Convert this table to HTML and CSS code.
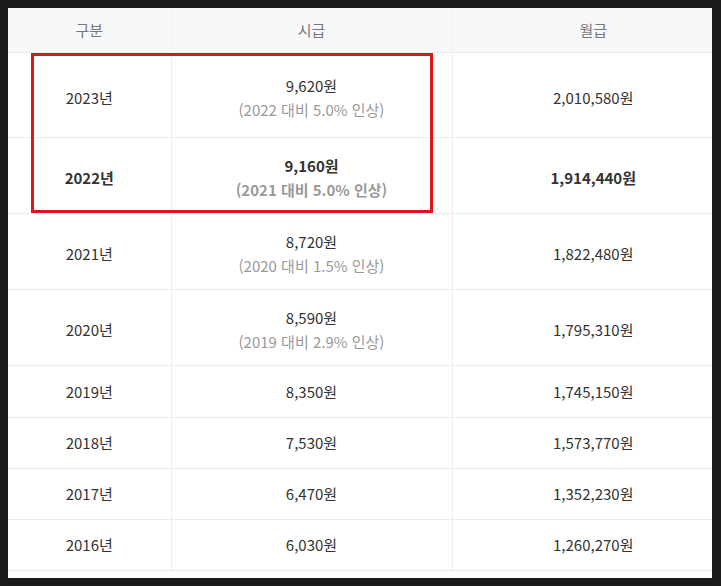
FILE: index.html
```html
<!DOCTYPE html>
<html lang="ko">
<head>
<meta charset="utf-8">
<link rel="stylesheet" href="styles.css">
</head>
<body>
<div class="frame">
  <table class="wage">
    <colgroup><col class="c1"><col class="c2"><col class="c3"></colgroup>
    <thead>
      <tr class="head"><th>구분</th><th>시급</th><th>월급</th></tr>
    </thead>
    <tbody>
      <tr class="r-first"><td>2023년</td><td>9,620원<span class="sub">(2022 대비 5.0% 인상)</span></td><td>2,010,580원</td></tr>
      <tr class="r-tall bold"><td>2022년</td><td>9,160원<span class="sub">(2021 대비 5.0% 인상)</span></td><td>1,914,440원</td></tr>
      <tr class="r-tall"><td>2021년</td><td>8,720원<span class="sub">(2020 대비 1.5% 인상)</span></td><td>1,822,480원</td></tr>
      <tr class="r-tall"><td>2020년</td><td>8,590원<span class="sub">(2019 대비 2.9% 인상)</span></td><td>1,795,310원</td></tr>
      <tr class="r-mid"><td>2019년</td><td>8,350원</td><td>1,745,150원</td></tr>
      <tr class="r-short"><td>2018년</td><td>7,530원</td><td>1,573,770원</td></tr>
      <tr class="r-short"><td>2017년</td><td>6,470원</td><td>1,352,230원</td></tr>
      <tr class="r-short"><td>2016년</td><td>6,030원</td><td>1,260,270원</td></tr>
    </tbody>
  </table>
  <div class="highlight"></div>
</div>
</body>
</html>
```
FILE: styles.css
```css
html, body {
  margin: 0;
  padding: 0;
  background: #1b1b1b;
}
body {
  padding: 8px 0 0 8px;
  font-family: "Noto Sans CJK KR", "Noto Sans", sans-serif;
}
.frame {
  position: relative;
  width: 704px;
  height: 570px;
  background: #fff;
  overflow: hidden;
}
.wage {
  border-collapse: collapse;
  table-layout: fixed;
  width: 726px;
  font-size: 15px;
  color: #333;
}
.c1 { width: 163px; }
.c2 { width: 281px; }
.c3 { width: 282px; }
.wage th, .wage td {
  padding: 0;
  text-align: center;
  vertical-align: middle;
  border-bottom: 1px solid #ececec;
  border-left: 1px solid #ececec;
  line-height: 24px;
}
.wage th:first-child, .wage td:first-child { border-left: none; }
.head th {
  height: 43px;
  background: #f7f8fa;
  font-weight: normal;
  color: #777;
  border-left-color: #f0f1f3;
  padding-bottom: 1px;
}
.sub {
  display: block;
  color: #999;
}
.r-first td { height: 85px; padding-top: 5px; box-sizing: border-box; }
.r-tall td { height: 76px; padding-top: 4px; box-sizing: border-box; }
.r-mid td { height: 51px; }
.r-short td { height: 50px; }
.bold td { font-weight: bold; }
.highlight {
  position: absolute;
  left: 23px;
  top: 45px;
  width: 402px;
  height: 160px;
  box-sizing: border-box;
  border: 3px solid #e0141a;
}
```
